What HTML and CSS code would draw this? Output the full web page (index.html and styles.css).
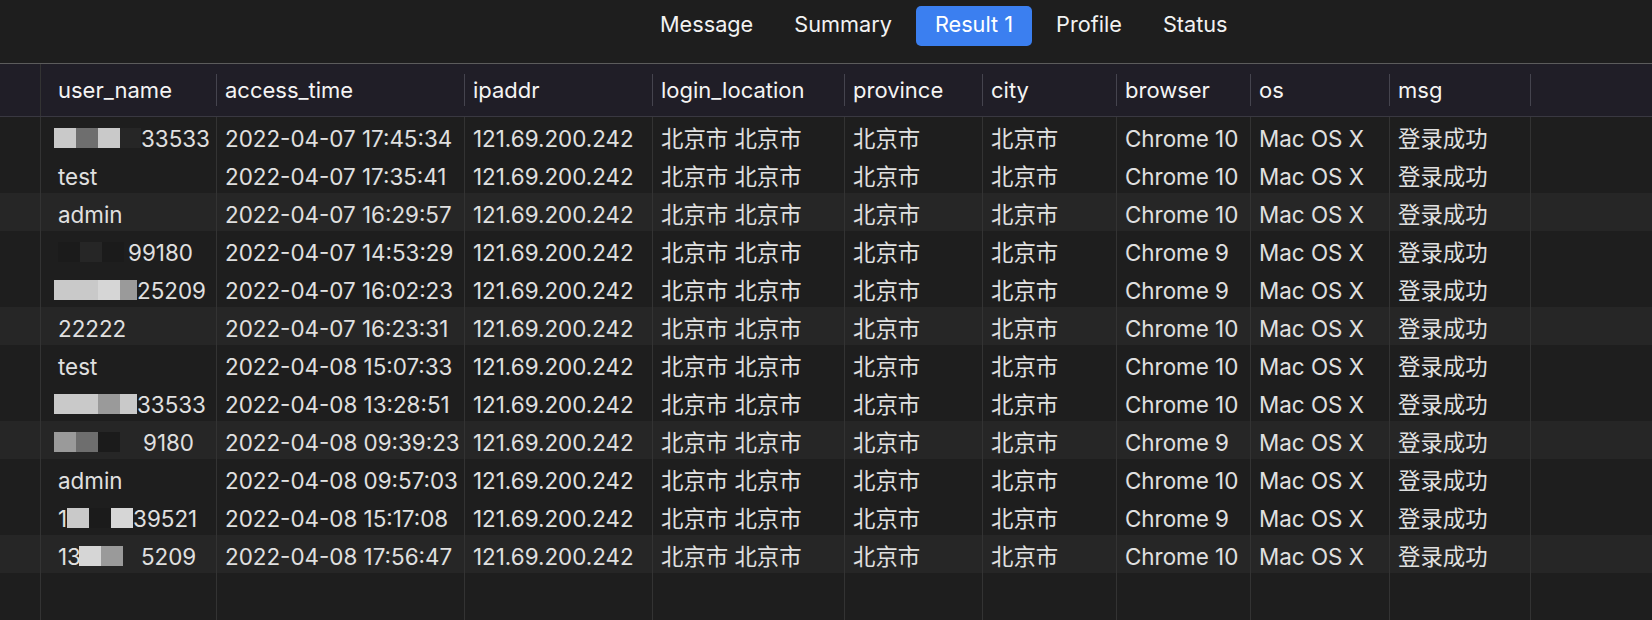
FILE: index.html
```html
<!DOCTYPE html>
<html lang="zh">
<head>
<meta charset="utf-8">
<title>Result 1</title>
<link rel="stylesheet" href="styles.css">
</head>
<body>
<div class="app">
  <div class="toolbar">
    <div class="tabs">
      <span class="tab">Message</span>
      <span class="tab">Summary</span>
      <span class="tab active">Result 1</span>
      <span class="tab">Profile</span>
      <span class="tab">Status</span>
    </div>
  </div>
  <div class="table">
    <div class="row head">
      <div class="cell gut"></div>
      <div class="cell first">user_name</div>
      <div class="cell">access_time</div>
      <div class="cell">ipaddr</div>
      <div class="cell">login_location</div>
      <div class="cell">province</div>
      <div class="cell">city</div>
      <div class="cell">browser</div>
      <div class="cell">os</div>
      <div class="cell">msg</div>
      <div class="cell rest"></div>
    </div>

    <div class="row">
      <div class="cell gut"></div>
      <div class="cell first"><span class="mosaic w87"><i class="b l"></i><i class="b m"></i><i class="b l"></i><i class="b d"></i></span>33533</div>
      <div class="cell">2022-04-07 17:45:34</div>
      <div class="cell">121.69.200.242</div>
      <div class="cell zh">北京市 北京市</div>
      <div class="cell zh">北京市</div>
      <div class="cell zh">北京市</div>
      <div class="cell">Chrome 10</div>
      <div class="cell">Mac OS X</div>
      <div class="cell zh">登录成功</div>
      <div class="cell rest"></div>
    </div>
    <div class="row">
      <div class="cell gut"></div>
      <div class="cell first">test</div>
      <div class="cell">2022-04-07 17:35:41</div>
      <div class="cell">121.69.200.242</div>
      <div class="cell zh">北京市 北京市</div>
      <div class="cell zh">北京市</div>
      <div class="cell zh">北京市</div>
      <div class="cell">Chrome 10</div>
      <div class="cell">Mac OS X</div>
      <div class="cell zh">登录成功</div>
      <div class="cell rest"></div>
    </div>
    <div class="row stripe">
      <div class="cell gut"></div>
      <div class="cell first">admin</div>
      <div class="cell">2022-04-07 16:29:57</div>
      <div class="cell">121.69.200.242</div>
      <div class="cell zh">北京市 北京市</div>
      <div class="cell zh">北京市</div>
      <div class="cell zh">北京市</div>
      <div class="cell">Chrome 10</div>
      <div class="cell">Mac OS X</div>
      <div class="cell zh">登录成功</div>
      <div class="cell rest"></div>
    </div>
    <div class="row">
      <div class="cell gut"></div>
      <div class="cell first"><span class="mosaic w70"><i class="b k"></i><i class="b d"></i><i class="b k"></i></span>99180</div>
      <div class="cell">2022-04-07 14:53:29</div>
      <div class="cell">121.69.200.242</div>
      <div class="cell zh">北京市 北京市</div>
      <div class="cell zh">北京市</div>
      <div class="cell zh">北京市</div>
      <div class="cell">Chrome 9</div>
      <div class="cell">Mac OS X</div>
      <div class="cell zh">登录成功</div>
      <div class="cell rest"></div>
    </div>
    <div class="row">
      <div class="cell gut"></div>
      <div class="cell first"><span class="mosaic w83"><i class="b l"></i><i class="b l"></i><i class="b x"></i><i class="b g"></i></span>25209</div>
      <div class="cell">2022-04-07 16:02:23</div>
      <div class="cell">121.69.200.242</div>
      <div class="cell zh">北京市 北京市</div>
      <div class="cell zh">北京市</div>
      <div class="cell zh">北京市</div>
      <div class="cell">Chrome 9</div>
      <div class="cell">Mac OS X</div>
      <div class="cell zh">登录成功</div>
      <div class="cell rest"></div>
    </div>
    <div class="row stripe">
      <div class="cell gut"></div>
      <div class="cell first">22222</div>
      <div class="cell">2022-04-07 16:23:31</div>
      <div class="cell">121.69.200.242</div>
      <div class="cell zh">北京市 北京市</div>
      <div class="cell zh">北京市</div>
      <div class="cell zh">北京市</div>
      <div class="cell">Chrome 10</div>
      <div class="cell">Mac OS X</div>
      <div class="cell zh">登录成功</div>
      <div class="cell rest"></div>
    </div>
    <div class="row">
      <div class="cell gut"></div>
      <div class="cell first">test</div>
      <div class="cell">2022-04-08 15:07:33</div>
      <div class="cell">121.69.200.242</div>
      <div class="cell zh">北京市 北京市</div>
      <div class="cell zh">北京市</div>
      <div class="cell zh">北京市</div>
      <div class="cell">Chrome 10</div>
      <div class="cell">Mac OS X</div>
      <div class="cell zh">登录成功</div>
      <div class="cell rest"></div>
    </div>
    <div class="row">
      <div class="cell gut"></div>
      <div class="cell first"><span class="mosaic w83"><i class="b l"></i><i class="b l"></i><i class="b g"></i><i class="b l"></i></span>33533</div>
      <div class="cell">2022-04-08 13:28:51</div>
      <div class="cell">121.69.200.242</div>
      <div class="cell zh">北京市 北京市</div>
      <div class="cell zh">北京市</div>
      <div class="cell zh">北京市</div>
      <div class="cell">Chrome 10</div>
      <div class="cell">Mac OS X</div>
      <div class="cell zh">登录成功</div>
      <div class="cell rest"></div>
    </div>
    <div class="row stripe">
      <div class="cell gut"></div>
      <div class="cell first"><span class="mosaic w89"><i class="b g"></i><i class="b m"></i><i class="b k"></i><i class="b d"></i></span>9180</div>
      <div class="cell">2022-04-08 09:39:23</div>
      <div class="cell">121.69.200.242</div>
      <div class="cell zh">北京市 北京市</div>
      <div class="cell zh">北京市</div>
      <div class="cell zh">北京市</div>
      <div class="cell">Chrome 9</div>
      <div class="cell">Mac OS X</div>
      <div class="cell zh">登录成功</div>
      <div class="cell rest"></div>
    </div>
    <div class="row">
      <div class="cell gut"></div>
      <div class="cell first">admin</div>
      <div class="cell">2022-04-08 09:57:03</div>
      <div class="cell">121.69.200.242</div>
      <div class="cell zh">北京市 北京市</div>
      <div class="cell zh">北京市</div>
      <div class="cell zh">北京市</div>
      <div class="cell">Chrome 10</div>
      <div class="cell">Mac OS X</div>
      <div class="cell zh">登录成功</div>
      <div class="cell rest"></div>
    </div>
    <div class="row">
      <div class="cell gut"></div>
      <div class="cell first">1<span class="mosaic w66"><i class="b l"></i><i class="b k"></i><i class="b x"></i></span>39521</div>
      <div class="cell">2022-04-08 15:17:08</div>
      <div class="cell">121.69.200.242</div>
      <div class="cell zh">北京市 北京市</div>
      <div class="cell zh">北京市</div>
      <div class="cell zh">北京市</div>
      <div class="cell">Chrome 9</div>
      <div class="cell">Mac OS X</div>
      <div class="cell zh">登录成功</div>
      <div class="cell rest"></div>
    </div>
    <div class="row stripe">
      <div class="cell gut"></div>
      <div class="cell first">13<span class="mosaic w62"><i class="b x"></i><i class="b g"></i><i class="b d"></i><i class="b m"></i></span>5209</div>
      <div class="cell">2022-04-08 17:56:47</div>
      <div class="cell">121.69.200.242</div>
      <div class="cell zh">北京市 北京市</div>
      <div class="cell zh">北京市</div>
      <div class="cell zh">北京市</div>
      <div class="cell">Chrome 10</div>
      <div class="cell">Mac OS X</div>
      <div class="cell zh">登录成功</div>
      <div class="cell rest"></div>
    </div>

    <div class="row filler">
      <div class="cell gut"></div>
      <div class="cell"></div>
      <div class="cell"></div>
      <div class="cell"></div>
      <div class="cell"></div>
      <div class="cell"></div>
      <div class="cell"></div>
      <div class="cell"></div>
      <div class="cell"></div>
      <div class="cell"></div>
      <div class="cell rest"></div>
    </div>
  </div>
</div>
</body>
</html>
```

FILE: styles.css
```css
* { box-sizing: border-box; }
html, body {
  margin: 0;
  padding: 0;
  background: #1e1e1e;
}
body {
  width: 1652px;
  height: 620px;
  overflow: hidden;
  font-family: "Inter", "Noto Sans CJK SC", sans-serif;
  color: #e0e0e0;
}
.app {
  display: flex;
  flex-direction: column;
  height: 620px;
}
.toolbar {
  height: 64px;
  border-bottom: 1px solid #5c5c5c;
  display: flex;
  align-items: flex-start;
  padding-left: 643px;
  padding-top: 6px;
}
.tabs {
  display: flex;
  gap: 7px;
}
.tab {
  height: 40px;
  padding: 0 17px 4px;
  display: flex;
  align-items: center;
  font-size: 21.7px;
  color: #f2f2f2;
  border-radius: 5px;
}
.tab.active {
  padding: 0 19px 4px;
  background: #3b7ff0;
  color: #ffffff;
}
.table {
  flex: 1;
  display: flex;
  flex-direction: column;
}
.row {
  display: grid;
  grid-template-columns: 41px 176px 248px 188px 192px 138px 134px 134px 139px 141px 1fr;
  height: 38px;
  font-size: 22.4px;
}
.row.head {
  height: 53px;
  font-size: 22px;
  background: #201e27;
  border-bottom: 1px solid #393841;
  color: #f4f4f4;
}
.row.stripe {
  background: #262626;
}
.row.filler {
  flex: 1;
  height: auto;
}
.cell {
  border-right: 1px solid #333333;
  padding-left: 8px;
  padding-top: 4px;
  display: flex;
  align-items: center;
  white-space: nowrap;
  overflow: hidden;
}
.cell.zh {
  padding-top: 1px;
}
.cell.first {
  padding-left: 17px;
}
.cell.rest {
  border-right: none;
}
.head .cell {
  border-right: none;
  position: relative;
  padding-top: 0;
}
.head .cell.gut {
  border-right: 1px solid #333333;
}
.head .cell::after {
  content: "";
  position: absolute;
  right: 0;
  top: 10px;
  height: 32px;
  width: 1px;
  background: #45444e;
}
.head .cell.gut::after,
.head .cell.rest::after {
  display: none;
}
.mosaic {
  display: inline-flex;
  height: 20px;
  margin-left: -4px;
  overflow: hidden;
}
.mosaic .b {
  display: block;
  width: 22px;
  height: 20px;
  flex: none;
}
.w87 { width: 87px; }
.w83 { width: 83px; }
.w89 { width: 89px; }
.w70 { width: 70px; margin-left: 0; }
.w66 { width: 66px; margin-left: 0; }
.w62 { width: 62px; margin-left: -2px; }
.b.l { background: #c9c9c9; }
.b.x { background: #d6d6d6; }
.b.g { background: #9a9a9a; }
.b.m { background: #6e6e6e; }
.b.d { background: #262626; }
.b.k { background: #1b1b1b; }
```
